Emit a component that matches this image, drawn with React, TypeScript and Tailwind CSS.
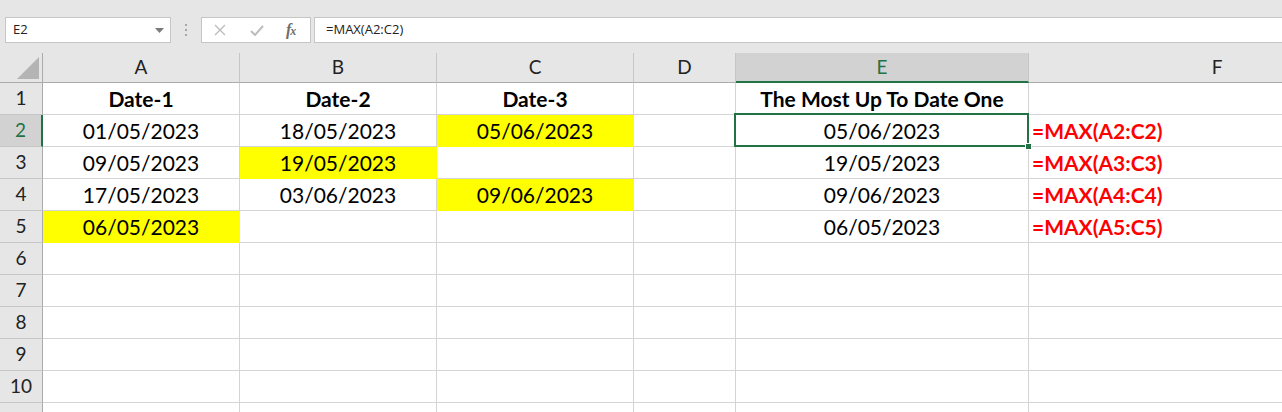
const cols = [
  { key: "A", w: "w-[197px]" },
  { key: "B", w: "w-[197px]" },
  { key: "C", w: "w-[197px]" },
  { key: "D", w: "w-[102px]" },
  { key: "E", w: "w-[293px]" },
];

type Row = {
  n: number;
  a?: string;
  b?: string;
  c?: string;
  e?: string;
  f?: string;
  yellow?: string;
  head?: boolean;
};

const rows: Row[] = [
  { n: 1, a: "Date-1", b: "Date-2", c: "Date-3", e: "The Most Up To Date One", head: true },
  { n: 2, a: "01/05/2023", b: "18/05/2023", c: "05/06/2023", e: "05/06/2023", f: "=MAX(A2:C2)", yellow: "C" },
  { n: 3, a: "09/05/2023", b: "19/05/2023", e: "19/05/2023", f: "=MAX(A3:C3)", yellow: "B" },
  { n: 4, a: "17/05/2023", b: "03/06/2023", c: "09/06/2023", e: "09/06/2023", f: "=MAX(A4:C4)", yellow: "C" },
  { n: 5, a: "06/05/2023", e: "06/05/2023", f: "=MAX(A5:C5)", yellow: "A" },
  { n: 6 },
  { n: 7 },
  { n: 8 },
  { n: 9 },
  { n: 10 },
  { n: 11 },
];

function Toolbar() {
  return (
    <div className="h-[53px] pt-[17px] flex items-start font-['Open_Sans',sans-serif] text-[13px] text-[#222]">
      {/* Name box */}
      <div className="ml-[5px] w-[166px] h-[26px] bg-white border border-[#c6c6c6] flex items-center justify-between pl-[7px] pr-[6px]">
        <span>E2</span>
        <svg width="9" height="5" viewBox="0 0 9 5">
          <path d="M0 0 H9 L4.5 5 Z" fill="#7a7a7a" />
        </svg>
      </div>
      <div className="w-[30px] h-[26px] flex flex-col items-center justify-center gap-[3px]">
        <span className="w-[2px] h-[2px] bg-[#a6a6a6]" />
        <span className="w-[2px] h-[2px] bg-[#a6a6a6]" />
        <span className="w-[2px] h-[2px] bg-[#a6a6a6]" />
      </div>
      {/* Cancel / enter / fx */}
      <div className="w-[110px] h-[26px] bg-white border border-[#c6c6c6] flex items-center">
        <svg className="ml-[12px]" width="12" height="12" viewBox="0 0 12 12">
          <path d="M1 1 L11 11 M11 1 L1 11" stroke="#bdbdbd" strokeWidth="1.4" />
        </svg>
        <svg className="ml-[24px]" width="14" height="11" viewBox="0 0 14 11">
          <path d="M1 6 L5 10 L13 1" stroke="#bdbdbd" strokeWidth="2" fill="none" />
        </svg>
        <span className="ml-[22px] font-['Liberation_Serif',serif] italic font-bold text-[16px] leading-none text-[#6d6d6d] tracking-[-1px]">
          f<span className="text-[12px]">x</span>
        </span>
      </div>
      {/* Formula input */}
      <div className="ml-[3px] flex-1 h-[26px] bg-white border-y border-l border-[#c6c6c6] flex items-center pl-[11px]">
        =MAX(A2:C2)
      </div>
    </div>
  );
}

function HeaderRow() {
  return (
    <div className="flex h-[30px] bg-[#e6e6e6] text-[19px] text-[#222]">
      <div className="w-[43px] shrink-0 border-r border-b border-[#ababab] relative">
        <svg className="absolute left-[17px] top-[4px]" width="22" height="22" viewBox="0 0 22 22">
          <path d="M22 0 V22 H0 Z" fill="#b4b4b4" />
        </svg>
      </div>
      {cols.map((c) =>
        c.key === "E" ? (
          <div
            key={c.key}
            className={`${c.w} shrink-0 bg-[#d2d2d2] border-r border-[#c6c6c6] border-b-2 border-b-[#217346] flex items-center justify-center text-[#217346]`}
          >
            {c.key}
          </div>
        ) : (
          <div
            key={c.key}
            className={`${c.w} shrink-0 border-r border-[#c6c6c6] border-b border-b-[#ababab] flex items-center justify-center`}
          >
            {c.key}
          </div>
        )
      )}
      <div className="w-[376px] shrink-0 border-b border-[#ababab] flex items-center justify-center">
        F
      </div>
    </div>
  );
}

function Cell({ w, text, yellow, bold }: { w: string; text?: string; yellow?: boolean; bold?: boolean }) {
  return (
    <div
      className={`${w} shrink-0 border-r border-b flex items-center justify-center ${
        yellow ? "bg-[#ffff00] border-[#ffff00]" : "bg-white border-[#d4d4d4]"
      } ${bold ? "font-bold" : ""}`}
    >
      {text}
    </div>
  );
}

function DataRow({ r }: { r: Row }) {
  const sel = r.n === 2;
  // the 11th row is only a sliver at the bottom edge, its number falls below the frame
  const label = r.n < 11 ? r.n : "";
  return (
    <div className="flex h-[32px] text-[21px] text-black">
      {sel ? (
        <div className="w-[43px] shrink-0 bg-[#d2d2d2] border-r-2 border-r-[#217346] border-b border-b-[#c6c6c6] flex items-center justify-center text-[19px] text-[#217346]">
          {label}
        </div>
      ) : (
        <div className="w-[43px] shrink-0 bg-[#e6e6e6] border-r border-r-[#ababab] border-b border-b-[#c6c6c6] flex items-center justify-center text-[19px] text-[#222]">
          {label}
        </div>
      )}
      <Cell w="w-[197px]" text={r.a} yellow={r.yellow === "A"} bold={r.head} />
      <Cell w="w-[197px]" text={r.b} yellow={r.yellow === "B"} bold={r.head} />
      <Cell w="w-[197px]" text={r.c} yellow={r.yellow === "C"} bold={r.head} />
      <Cell w="w-[102px]" />
      <div
        className={`w-[293px] shrink-0 relative bg-white border-r border-b border-[#d4d4d4] flex items-center justify-center ${
          r.head ? "font-bold" : ""
        }`}
      >
        {r.e}
        {sel && (
          <div className="absolute z-10 left-[-2px] top-[-2px] right-[-1px] bottom-[-1px] border-2 border-[#217346]">
            <div className="absolute right-[-5px] bottom-[-5px] w-[7px] h-[7px] bg-[#217346] border border-white" />
          </div>
        )}
      </div>
      <div className="w-[376px] shrink-0 bg-white border-b border-[#d4d4d4] flex items-center pl-[3px] font-bold text-[#ff0000]">
        {r.f}
      </div>
    </div>
  );
}

export default function App() {
  return (
    <div className="w-[1282px] h-[412px] overflow-hidden bg-[#e6e6e6] font-['Lato',sans-serif]">
      <Toolbar />
      <HeaderRow />
      {rows.map((r) => (
        <DataRow key={r.n} r={r} />
      ))}
    </div>
  );
}
